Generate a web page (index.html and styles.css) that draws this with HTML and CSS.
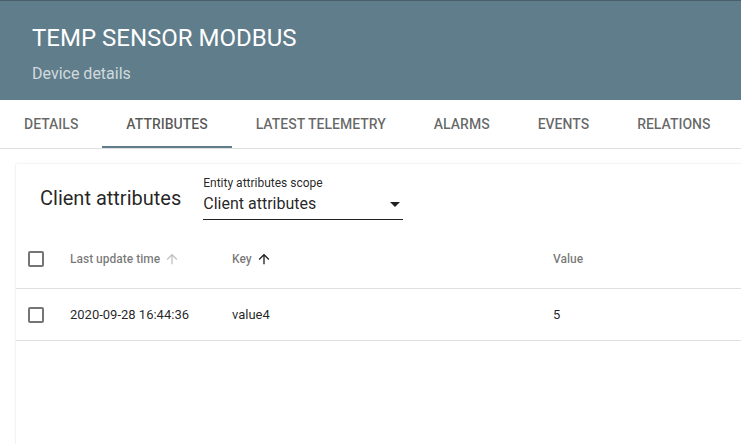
FILE: index.html
```html
<!DOCTYPE html>
<html>
<head>
<meta charset="utf-8">
<link rel="stylesheet" href="styles.css">
</head>
<body>
<header class="header">
  <h1 class="title">TEMP SENSOR MODBUS</h1>
  <div class="subtitle">Device details</div>
</header>
<nav class="tabs">
  <div class="tab">DETAILS</div>
  <div class="tab active">ATTRIBUTES</div>
  <div class="tab">LATEST TELEMETRY</div>
  <div class="tab">ALARMS</div>
  <div class="tab">EVENTS</div>
  <div class="tab">RELATIONS</div>
</nav>
<main class="content">
  <section class="card">
    <div class="toolbar">
      <div class="card-title">Client attributes</div>
      <div class="select">
        <div class="select-label">Entity attributes scope</div>
        <div class="select-field">
          <span class="select-value">Client attributes</span>
          <span class="select-arrow"></span>
        </div>
      </div>
    </div>
    <div class="table">
      <div class="row head">
        <div class="cell check"><span class="checkbox"></span></div>
        <div class="cell time">Last update time
          <svg class="sort faint" viewBox="0 0 24 24"><path d="M4 12l1.41 1.41L11 7.83V20h2V7.83l5.58 5.59L20 12l-8-8-8 8z"/></svg>
        </div>
        <div class="cell key">Key
          <svg class="sort" viewBox="0 0 24 24"><path d="M4 12l1.41 1.41L11 7.83V20h2V7.83l5.58 5.59L20 12l-8-8-8 8z"/></svg>
        </div>
        <div class="cell value">Value</div>
      </div>
      <div class="row data">
        <div class="cell check"><span class="checkbox"></span></div>
        <div class="cell time">2020-09-28 16:44:36</div>
        <div class="cell key">value4</div>
        <div class="cell value">5</div>
      </div>
    </div>
  </section>
</main>
</body>
</html>
```
FILE: styles.css
```css
* { box-sizing: border-box; }
html, body { margin: 0; padding: 0; }
body {
  font-family: Roboto, "Noto Sans", sans-serif;
  background: #fff;
  width: 741px;
  height: 444px;
  overflow: hidden;
}
.header {
  height: 100px;
  background: #607d8b;
  border-top: 1px solid #4a5f69;
  padding: 21px 0 0 32px;
  color: #fff;
}
.title {
  margin: 0;
  font-size: 24px;
  font-weight: 400;
  line-height: 32px;
}
.subtitle {
  margin-top: 10px;
  font-size: 16px;
  line-height: 20px;
  color: rgba(255,255,255,0.72);
}
.tabs {
  display: flex;
  height: 49px;
  border-bottom: 1px solid #e0e0e0;
  white-space: nowrap;
}
.tab {
  padding: 0 24px;
  height: 48px;
  line-height: 48px;
  font-size: 14px;
  font-weight: 500;
  color: rgba(0,0,0,0.6);
  border-bottom: 2px solid transparent;
}
.tab.active {
  border-bottom-color: #607d8b;
  color: rgba(0,0,0,0.66);
}
.content {
  padding: 15px 0 0 16px;
}
.card {
  background: #fff;
  height: 290px;
  margin-right: -4px;
  box-shadow: 0 0 2px rgba(0,0,0,0.14), 0 1px 1px rgba(0,0,0,0.04);
}
.toolbar {
  display: flex;
  align-items: center;
  height: 68px;
  padding-left: 24px;
}
.card-title {
  font-size: 20px;
  line-height: 24px;
  color: rgba(0,0,0,0.87);
  margin-right: 22px;
}
.select {
  width: 200px;
  margin-top: 0;
}
.select-label {
  font-size: 12px;
  line-height: 14px;
  color: rgba(0,0,0,0.87);
}
.select-field {
  display: flex;
  align-items: center;
  justify-content: space-between;
  margin-top: 4px;
  padding-bottom: 5px;
  border-bottom: 1px solid rgba(0,0,0,0.87);
}
.select-value {
  font-size: 16px;
  line-height: 20px;
  color: rgba(0,0,0,0.87);
}
.select-arrow {
  width: 0;
  height: 0;
  border-left: 5px solid transparent;
  border-right: 5px solid transparent;
  border-top: 5px solid rgba(0,0,0,0.87);
  margin-right: 3px;
}
.row {
  display: flex;
  align-items: center;
  border-bottom: 1px solid rgba(0,0,0,0.12);
}
.row.head { height: 57px; padding-bottom: 2px; }
.row.data { height: 52px; }
.cell { display: flex; align-items: center; }
.check { width: 54px; padding-left: 12px; }
.time { width: 162px; }
.key { width: 321px; }
.value { flex: 1; }
.head .cell {
  font-size: 12px;
  font-weight: 500;
  color: rgba(0,0,0,0.54);
}
.data .cell {
  font-size: 13px;
  color: rgba(0,0,0,0.87);
}
.checkbox {
  display: block;
  width: 16px;
  height: 16px;
  border: 2px solid rgba(0,0,0,0.54);
  border-radius: 2px;
}
.sort {
  width: 16px;
  height: 16px;
  margin-left: 4px;
  fill: rgba(0,0,0,0.87);
}
.sort.faint { fill: rgba(0,0,0,0.24); }
```
